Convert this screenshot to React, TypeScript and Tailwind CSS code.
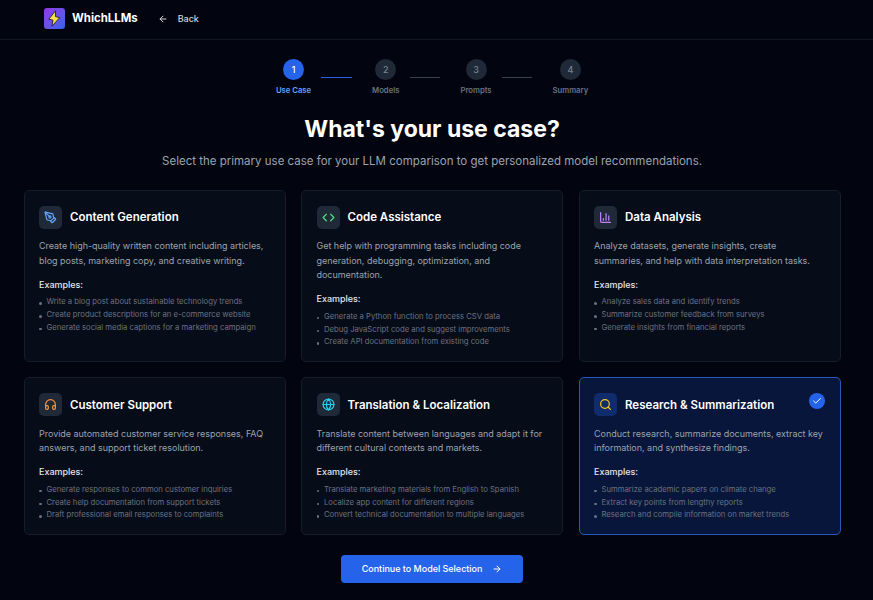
import { Fragment } from "react";
import {
  ArrowLeft,
  ArrowRight,
  ChartColumn,
  Check,
  Code,
  Globe,
  Headphones,
  PenTool,
  Search,
  type LucideIcon,
} from "lucide-react";
import clsx from "clsx";

type UseCase = {
  title: string;
  description: string;
  examples: string[];
  icon: LucideIcon;
  iconColor: string;
};

const steps = ["Use Case", "Models", "Prompts", "Summary"];

const useCases: UseCase[] = [
  {
    title: "Content Generation",
    description:
      "Create high-quality written content including articles, blog posts, marketing copy, and creative writing.",
    examples: [
      "Write a blog post about sustainable technology trends",
      "Create product descriptions for an e-commerce website",
      "Generate social media captions for a marketing campaign",
    ],
    icon: PenTool,
    iconColor: "text-[#60a5fa]",
  },
  {
    title: "Code Assistance",
    description:
      "Get help with programming tasks including code generation, debugging, optimization, and documentation.",
    examples: [
      "Generate a Python function to process CSV data",
      "Debug JavaScript code and suggest improvements",
      "Create API documentation from existing code",
    ],
    icon: Code,
    iconColor: "text-[#4ade80]",
  },
  {
    title: "Data Analysis",
    description:
      "Analyze datasets, generate insights, create summaries, and help with data interpretation tasks.",
    examples: [
      "Analyze sales data and identify trends",
      "Summarize customer feedback from surveys",
      "Generate insights from financial reports",
    ],
    icon: ChartColumn,
    iconColor: "text-[#c084fc]",
  },
  {
    title: "Customer Support",
    description:
      "Provide automated customer service responses, FAQ answers, and support ticket resolution.",
    examples: [
      "Generate responses to common customer inquiries",
      "Create help documentation from support tickets",
      "Draft professional email responses to complaints",
    ],
    icon: Headphones,
    iconColor: "text-[#fb923c]",
  },
  {
    title: "Translation & Localization",
    description:
      "Translate content between languages and adapt it for different cultural contexts and markets.",
    examples: [
      "Translate marketing materials from English to Spanish",
      "Localize app content for different regions",
      "Convert technical documentation to multiple languages",
    ],
    icon: Globe,
    iconColor: "text-[#22d3ee]",
  },
  {
    title: "Research & Summarization",
    description:
      "Conduct research, summarize documents, extract key information, and synthesize findings.",
    examples: [
      "Summarize academic papers on climate change",
      "Extract key points from lengthy reports",
      "Research and compile information on market trends",
    ],
    icon: Search,
    iconColor: "text-[#facc15]",
  },
];

function Logo() {
  return (
    <div className="flex size-[21px] items-center justify-center rounded-[3px] bg-linear-to-br from-[#9333ea] to-[#2563eb]">
      <svg viewBox="0 0 21 21" className="size-[21px]">
        <path
          d="M11.6 2.6 4.8 11.2 9 12.2 7.9 18.2 15.8 9.6 11.4 8.6Z"
          fill="#fde047"
          stroke="#2b2a3c"
          strokeWidth="1"
          strokeLinejoin="round"
        />
      </svg>
    </div>
  );
}

function Stepper() {
  return (
    <div className="flex justify-center">
      {steps.map((step, index) => (
        <Fragment key={step}>
          <div className="flex flex-col items-center">
            <div
              className={clsx(
                "flex size-[21px] items-center justify-center rounded-full text-[9px] font-medium",
                index === 0
                  ? "bg-[#2563eb] text-white"
                  : "bg-[#1f2937] text-[#7b8391]"
              )}
            >
              {index + 1}
            </div>
            <p
              className={clsx(
                "mt-[5.4px] text-[7.7px] leading-[10px] font-semibold",
                index === 0 ? "text-[#60a5fa]" : "text-[#6b7280]"
              )}
            >
              {step}
            </p>
          </div>
          {index < steps.length - 1 && (
            <div
              className={clsx(
                "mt-[17.4px] mr-[20.3px] ml-[10.2px] h-px w-[30.5px]",
                index === 0 ? "bg-[#2563eb]" : "bg-[#374151]"
              )}
            />
          )}
        </Fragment>
      ))}
    </div>
  );
}

function UseCaseCard({
  useCase,
  selected,
}: {
  useCase: UseCase;
  selected: boolean;
}) {
  const Icon = useCase.icon;

  return (
    <div
      className={clsx(
        "rounded-[5px] border px-[14.5px] pt-[15px]",
        selected
          ? "border-[#2459b8] bg-[#07163a]"
          : "border-[#151c2a] bg-[#070c19]"
      )}
    >
      <div className="flex items-start justify-between">
        <div className="flex items-center gap-[8px]">
          <div
            className={clsx(
              "flex size-[23px] items-center justify-center rounded-[5px]",
              selected ? "bg-[#112c6c]" : "bg-[#1f2937]"
            )}
          >
            <Icon
              className={clsx("size-[13px]", useCase.iconColor)}
              strokeWidth={2.2}
            />
          </div>
          <h3 className="text-[11.5px] leading-[18px] font-semibold text-white">
            {useCase.title}
          </h3>
        </div>
        {selected && (
          <div className="flex size-[16px] items-center justify-center rounded-full bg-[#2563eb]">
            <Check className="size-[10px] text-white" strokeWidth={2.4} />
          </div>
        )}
      </div>
      <p className="mt-[10.2px] text-[8.96px] leading-[14.5px] text-[#9ca3af]">
        {useCase.description}
      </p>
      <h4 className="mt-[9.8px] text-[8.96px] leading-[13px] font-medium text-[#e5e7eb]">
        Examples:
      </h4>
      <ul className="mt-[5.3px] text-[7.7px] leading-[12.8px] text-[#6b7280]">
        {useCase.examples.map((example) => (
          <li key={example} className="flex">
            <span className="mt-[6px] mr-[5px] size-[2.5px] shrink-0 rounded-full bg-[#6b7280]" />
            {example}
          </li>
        ))}
      </ul>
    </div>
  );
}

export default function App() {
  return (
    <div className="h-[600px] overflow-hidden bg-[#02050f] font-['Inter',sans-serif] text-white">
      <header className="flex h-[40px] items-center border-b border-[#111623] pb-[3px] pl-[43.7px]">
        <Logo />
        <span className="mt-px ml-[7.3px] text-[11.4px] font-bold">
          WhichLLMs
        </span>
        <button className="mt-px ml-[20px] flex items-center gap-[10px] text-[9px] font-medium text-[#d1d5db]">
          <ArrowLeft className="size-[10px]" strokeWidth={2.4} />
          Back
        </button>
      </header>

      <main className="w-[864px] pt-[19.4px] pr-[23.4px] pl-[23.5px]">
        <Stepper />

        <div className="mt-[20.2px] text-center">
          <h1 className="text-[23px] leading-[26px] font-bold">
            What's your use case?
          </h1>
          <p className="mt-[10px] text-[11.5px] leading-[18px] text-[#9ca3af]">
            Select the primary use case for your LLM comparison to get
            personalized model recommendations.
          </p>
        </div>

        <div className="mt-[20px] grid grid-cols-3 grid-rows-[172px_157.4px] gap-x-[15.4px] gap-y-[15.5px]">
          {useCases.map((useCase) => (
            <UseCaseCard
              key={useCase.title}
              useCase={useCase}
              selected={useCase.title === "Research & Summarization"}
            />
          ))}
        </div>

        <div className="mt-[20.1px] flex justify-center">
          <button className="flex h-[28.5px] w-[181.4px] items-center justify-center gap-[10px] rounded-[4px] bg-[#2563eb] text-[8.96px] font-medium text-white">
            Continue to Model Selection
            <ArrowRight className="size-[10px]" strokeWidth={2.4} />
          </button>
        </div>
      </main>
    </div>
  );
}
